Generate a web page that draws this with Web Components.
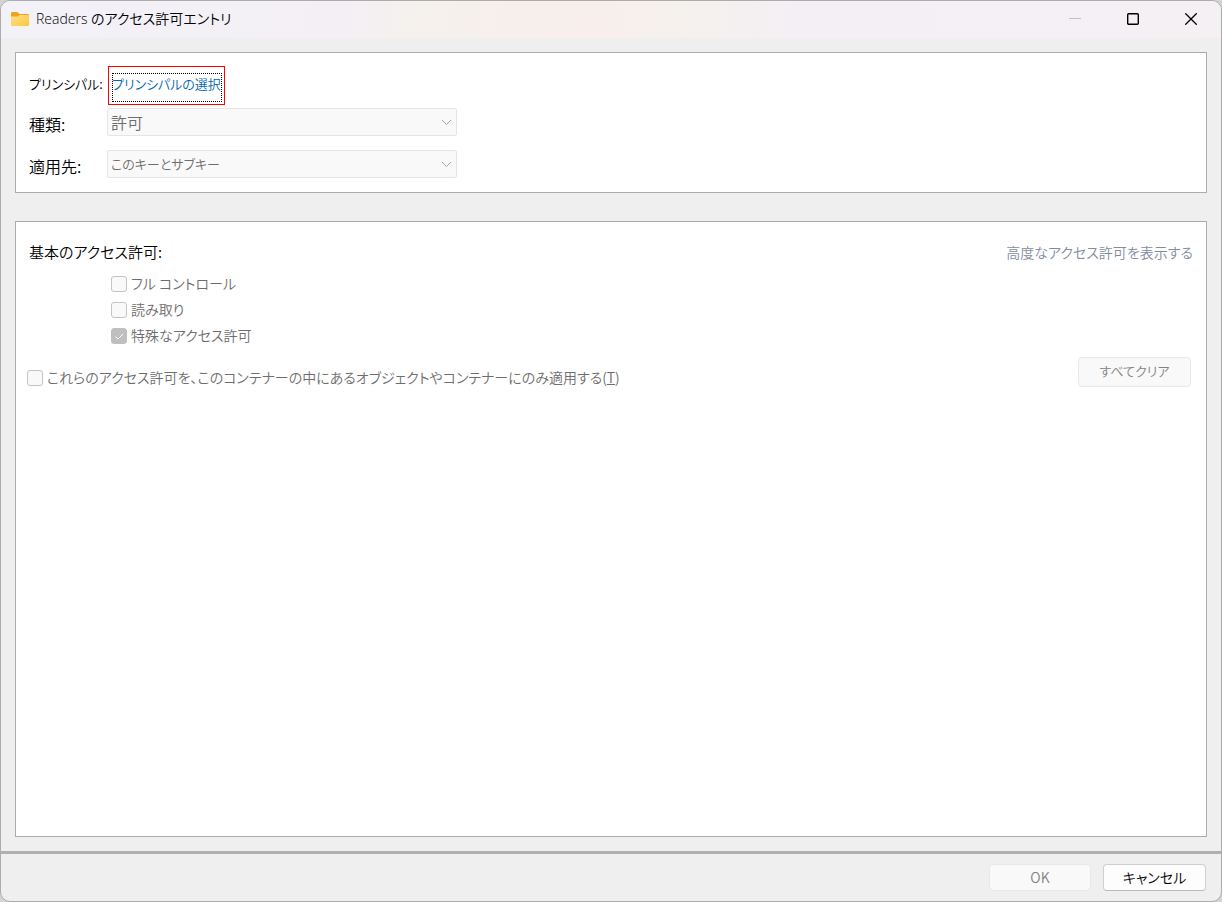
<!DOCTYPE html>
<html lang="ja">
<head>
<meta charset="utf-8">
<title>Readers のアクセス許可エントリ</title>
<style>
  html, body { height: 100%; }
  body {
    margin: 0;
    background: #d4d4d4;
    color: #000;
    font: 16px/24px "Noto Sans CJK JP", sans-serif;
    font-weight: 350;
    font-feature-settings: "palt";
  }
</style>
</head>
<body>
<permission-window></permission-window>

<script>
class BaseElement extends HTMLElement {
  constructor() {
    super();
    const root = this.attachShadow({ mode: "open" });
    const template = document.createElement("template");
    template.innerHTML = this.constructor.markup;
    root.append(template.content.cloneNode(true));
  }
}

class TitleBar extends BaseElement {
  static markup = `
    <style>
      :host {
        display: flex; align-items: center; height: 37px; padding: 0 1px 0 9px; gap: 6px;
        font-family: "Open Sans", "Noto Sans CJK JP", sans-serif;
        font-size: 14px;
        background: linear-gradient(90deg, #f3f2f8, #f3eff5 28%, #f5f1ed 34%, #f7efec 42%, #f8efec 50%, #f5f1ed 56%, #f3eff5 66%, #f4f0f4);
      }
      .folder { flex: none; }
      h1 { flex: 1; margin: 0; padding-bottom: 2px; font: inherit; }
      nav { display: flex; align-self: stretch; }
      button { display: grid; place-items: center; width: 58px; padding: 0 0 2px; border: 0; background: none; color: #000; }
      button:disabled { color: #c4c1c5; }
    </style>
    <svg class="folder" width="20" height="18" viewBox="0 0 20 18" aria-hidden="true">
      <defs><linearGradient id="f" x1="0" y1="0" x2="1" y2="1"><stop offset="0" stop-color="#ffe08a"/><stop offset="1" stop-color="#fac93d"/></linearGradient></defs>
      <path d="M1 2.2Q1 1 2.2 1H6.6Q7.4 1 8 1.6L9.4 3H17.8Q19 3 19 4.2V9H1Z" fill="#eca41c"/>
      <path d="M1 5.4H7.4Q8 5.4 8.5 5L9.7 4H17.8Q19 4 19 5.2V13.8Q19 15 17.8 15H2.2Q1 15 1 13.8Z" fill="url(#f)"/>
    </svg>
    <h1><slot></slot></h1>
    <nav>
      <button type="button" disabled aria-label="最小化"><svg width="12" height="12"><path d="M0 5.5H12" stroke="currentColor"/></svg></button>
      <button type="button" aria-label="最大化"><svg width="12" height="12" fill="none"><rect x=".7" y=".7" width="10.6" height="10.6" rx="1" stroke="currentColor" stroke-width="1.4"/></svg></button>
      <button type="button" aria-label="閉じる"><svg width="12" height="12"><path d="M.3.3 11.7 11.7M11.7.3.3 11.7" stroke="currentColor" stroke-width="1.3"/></svg></button>
    </nav>`;
}

class GroupPanel extends BaseElement {
  static markup = `
    <style>:host { display: block; border: 1px solid #acacac; background: #fff; padding: 13px 13px 14px; }</style>
    <slot></slot>`;
}

class PrincipalField extends BaseElement {
  static markup = `
    <style>
      :host { display: grid; grid-template-columns: 79px max-content; align-items: start; font-size: 13px; }
      .name { padding-top: 6px; white-space: nowrap; }
      .mark { border: 1px solid #f00; padding: 6px 2px 2px 3px; }
      a {
        display: block; box-sizing: border-box; width: 110px; height: 29px;
        outline: 1px dotted #000; outline-offset: -1px;
        color: #0066b4; line-height: 22px; text-decoration: none; white-space: nowrap;
      }
    </style>
    <span class="name"><slot name="label"></slot></span>
    <span class="mark"><a href="#"><slot></slot></a></span>`;
}

class ComboField extends BaseElement {
  static markup = `
    <style>
      :host { display: grid; grid-template-columns: 78px minmax(0, 350px); height: 28px; }
      label { padding-top: 4px; }
      .box { position: relative; display: grid; }
      select {
        appearance: none; width: 100%; height: 28px; margin: 0; padding: 0 24px 0 3px;
        border: 1px solid #e5e5e5; border-radius: 2px; background: #f9f9f9;
        color: #6d6d6d; opacity: 1; font: inherit; font-feature-settings: inherit;
      }
      :host([kana]) select { font-size: 13px; }
      svg { position: absolute; right: 5px; top: 11px; pointer-events: none; }
    </style>
    <label for="choice"><slot></slot></label>
    <span class="box">
      <select id="choice" disabled><option></option></select>
      <svg width="11" height="7" fill="none" stroke="#a3a3a3"><path d="M1 1 5.5 5.5 10 1"/></svg>
    </span>`;
  connectedCallback() {
    this.shadowRoot.querySelector("option").textContent = this.getAttribute("value");
  }
}

class CheckOption extends BaseElement {
  static markup = `
    <style>
      :host { display: block; font-size: 14px; }
      label { display: flex; width: fit-content; align-items: center; gap: 4px; height: 26px; color: #6d6d6d; }
      input {
        appearance: none; flex: none; width: 16px; height: 16px; margin: 0;
        border: 1px solid #c4c4c4; border-radius: 3px; background: #f9f9f9;
      }
      input:checked {
        border-color: #bfbfbf;
        background: #bfbfbf url("data:image/svg+xml,%3Csvg xmlns='http://www.w3.org/2000/svg' viewBox='0 0 14 14' fill='none' stroke='white'%3E%3Cpath d='M3.5 7.5 6 10 11 5'/%3E%3C/svg%3E");
      }
      span { line-height: 24px; padding-bottom: 2px; }
    </style>
    <label><input type="checkbox" disabled><span><slot></slot></span></label>`;
  connectedCallback() {
    this.shadowRoot.querySelector("input").checked = this.hasAttribute("checked");
  }
}

class PushButton extends BaseElement {
  static markup = `
    <style>
      :host { display: block; width: 103px; height: 27px; font-size: 14px; }
      button {
        width: 100%; height: 100%; padding: 0 0 2px; border: 1px solid #cfcfcf; border-bottom-color: #bababa; border-radius: 4px;
        background: #fdfdfd; color: #000; font: inherit; font-feature-settings: inherit;
      }
      button:disabled { background: #f9f9f9; border-color: #e8e8e8; color: #838383; }
    </style>
    <button type="button"><slot></slot></button>`;
  connectedCallback() {
    this.shadowRoot.querySelector("button").disabled = this.hasAttribute("disabled");
  }
}

class PermissionWindow extends BaseElement {
  static markup = `
    <style>
      :host {
        display: flex; flex-direction: column; box-sizing: border-box; min-height: 100vh;
        border: 1px solid #acacac; border-radius: 10px; overflow: hidden; background: #efefef;
      }
      main { flex: 1; display: flex; flex-direction: column; gap: 28px; padding: 14px; }
      .subject { display: grid; }
      .subject combo-field:nth-of-type(1) { margin: 3px 0 14px; }
      .rights { flex: 1; }
      .head { display: flex; justify-content: space-between; padding-top: 5px; }
      h2 { margin: 0; font: inherit; font-size: 15px; }
      .head a { font-size: 14px; color: #838ba0; text-decoration: none; }
      .options { padding: 7px 0 0 82px; }
      .inherit { display: flex; justify-content: space-between; padding: 8px 2px 0 0; }
      .inherit check-option { padding-top: 8px; margin-left: -2px; }
      .inherit push-button { width: 113px; height: 30px; font-size: 13px; }
      footer { display: flex; justify-content: flex-end; gap: 12px; padding: 10px 15px; border-top: 3px solid #b0b0b0; }
      footer push-button[disabled] { width: 102px; }
    </style>
    <title-bar>Readers のアクセス許可エントリ</title-bar>
    <main>
      <group-panel class="subject">
        <principal-field><span slot="label">プリンシパル:</span>プリンシパルの選択</principal-field>
        <combo-field value="許可">種類:</combo-field>
        <combo-field kana value="このキーとサブキー">適用先:</combo-field>
      </group-panel>
      <group-panel class="rights">
        <div class="head"><h2>基本のアクセス許可:</h2><a href="#">高度なアクセス許可を表示する</a></div>
        <div class="options">
          <check-option>フル コントロール</check-option>
          <check-option>読み取り</check-option>
          <check-option checked>特殊なアクセス許可</check-option>
        </div>
        <div class="inherit">
          <check-option>これらのアクセス許可を、このコンテナーの中にあるオブジェクトやコンテナーにのみ適用する(<u>T</u>)</check-option>
          <push-button disabled>すべてクリア</push-button>
        </div>
      </group-panel>
    </main>
    <footer>
      <push-button disabled>OK</push-button>
      <push-button>キャンセル</push-button>
    </footer>`;
}

customElements.define("title-bar", TitleBar);
customElements.define("group-panel", GroupPanel);
customElements.define("principal-field", PrincipalField);
customElements.define("combo-field", ComboField);
customElements.define("check-option", CheckOption);
customElements.define("push-button", PushButton);
customElements.define("permission-window", PermissionWindow);
</script>
</body>
</html>
